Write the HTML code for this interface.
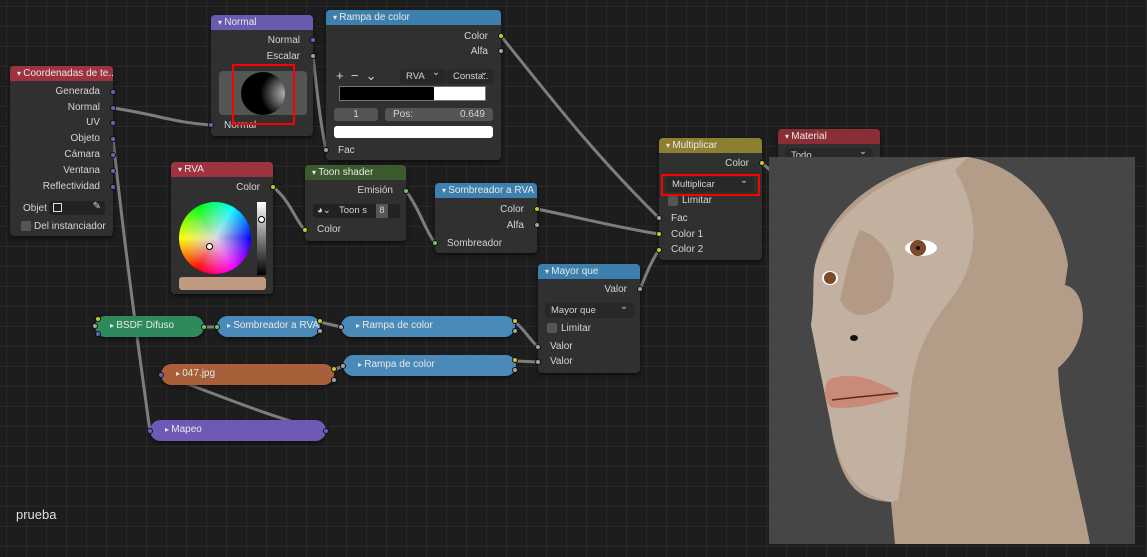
<!DOCTYPE html>
<html><head><meta charset="utf-8"><style>
*{box-sizing:border-box;margin:0;padding:0}
body{width:1147px;height:557px;overflow:hidden;position:relative;font-family:"Liberation Sans",sans-serif;font-size:10px;color:#d4d4d4;
background-color:#1d1d1d;
background-image:linear-gradient(#292929 1px,transparent 1px),linear-gradient(90deg,#292929 1px,transparent 1px);
background-size:20px 20px;background-position:6px 6px}
.n{position:absolute;background:#303030;border-radius:4px;box-shadow:0 2px 5px rgba(0,0,0,.6)}
.h{height:15px;border-radius:4px 4px 0 0;padding:2px 0 0 7px;color:#e8e8e8;font-size:10px;white-space:nowrap;overflow:hidden}
.h:before{content:"▾ ";font-size:8px}
.t{position:absolute;white-space:nowrap}
.r{text-align:right}
.s{position:absolute;width:6px;height:6px;border-radius:50%;border:1px solid #111}
.pu{background:#6363c7}.gr{background:#a1a1a1}.ye{background:#c7c729}.gn{background:#63c763}
.dd{position:absolute;background:#282828;border-radius:3px;padding:2px 6px;font-size:9.5px;white-space:nowrap}
.dd:after{content:"⌄";position:absolute;right:6px;top:-2px}
.cb{position:absolute;width:10px;height:10px;background:#555;border-radius:2px}
.c{position:absolute;border-radius:11px;height:21px;padding:4px 0 0 15px;color:#e8e8e8;font-size:10px;box-shadow:0 2px 4px rgba(0,0,0,.5);white-space:nowrap;overflow:hidden}
.c:before{content:"▸ ";font-size:8px}
</style></head><body>
<svg style="position:absolute;left:0;top:0" width="1147" height="557">
<g stroke="#7d7d7d" stroke-width="3" fill="none" stroke-linecap="round">
<path d="M113 108 C160 115,170 122,211 125"/>
<path d="M313 56 C318 100,320 120,326 150"/>
<path d="M501 36 C560 110,600 160,659 218"/>
<path d="M273 187 C290 200,295 220,305 230"/>
<path d="M406 191 C420 210,425 230,435 243"/>
<path d="M537 209 C590 220,620 228,659 234"/>
<path d="M640 289 C648 270,652 260,659 250"/>
<path d="M113 139 C125 250,140 360,150 431"/>
<path d="M180 381 C230 400,280 420,326 431"/>
<path d="M204 327 L217 327"/>
<path d="M320 322 L341 327"/>
<path d="M515 322 C525 330,530 340,538 347"/>
<path d="M516 361 L538 362"/>
<path d="M334 370 L343 366"/>
<path d="M762 163 L770 170"/>
</g></svg>

<div class="n" style="left:10px;top:66px;width:103px;height:170px">
<div class="h" style="background:#9e3340">Coordenadas de te..</div>
<div class="t r" style="right:13px;top:20px">Generada</div>
<div class="t r" style="right:13px;top:36px">Normal</div>
<div class="t r" style="right:13px;top:51px">UV</div>
<div class="t r" style="right:13px;top:67px">Objeto</div>
<div class="t r" style="right:13px;top:83px">Cámara</div>
<div class="t r" style="right:13px;top:99px">Ventana</div>
<div class="t r" style="right:13px;top:115px">Reflectividad</div>
<div class="t" style="left:13px;top:137px">Objet</div>
<div style="position:absolute;left:39px;top:135px;width:56px;height:14px;background:#222;border-radius:3px"><span style="position:absolute;left:4px;top:2px;width:9px;height:9px;border:1px solid #ddd"></span><span style="position:absolute;right:4px;top:0;font-size:10px">✎</span></div>
<div class="cb" style="left:11px;top:155px"></div>
<div class="t" style="left:24px;top:155px">Del instanciador</div>
</div>
<div class="s pu" style="left:110px;top:89px"></div><div class="s pu" style="left:110px;top:105px"></div><div class="s pu" style="left:110px;top:120px"></div><div class="s pu" style="left:110px;top:136px"></div><div class="s pu" style="left:110px;top:152px"></div><div class="s pu" style="left:110px;top:168px"></div><div class="s pu" style="left:110px;top:184px"></div>

<div class="n" style="left:211px;top:15px;width:102px;height:121px">
<div class="h" style="background:#6a5bb0">Normal</div>
<div class="t r" style="right:13px;top:20px">Normal</div>
<div class="t r" style="right:13px;top:36px">Escalar</div>
<div style="position:absolute;left:8px;top:56px;width:88px;height:44px;background:#555;border-radius:4px"></div>
<div style="position:absolute;left:30px;top:57px;width:44px;height:43px;border-radius:50%;background:radial-gradient(circle at 100% 50%,#b0b0b0 0,#666 22%,#000 50%)"></div>
<div class="t" style="left:13px;top:105px">Normal</div>
</div>
<div class="s pu" style="left:310px;top:37px"></div><div class="s gr" style="left:310px;top:53px"></div><div class="s pu" style="left:208px;top:122px"></div>
<div style="position:absolute;left:232px;top:64px;width:63px;height:61px;border:2px solid #f00"></div>

<div class="n" style="left:326px;top:10px;width:175px;height:150px">
<div class="h" style="background:#3d80ad">Rampa de color</div>
<div class="t r" style="right:13px;top:21px">Color</div>
<div class="t r" style="right:13px;top:36px">Alfa</div>
<div class="t" style="left:10px;top:58px;font-size:13px">+ &nbsp;− &nbsp;⌄</div>
<div class="dd" style="left:74px;top:59px;width:46px">RVA</div>
<div class="dd" style="left:121px;top:59px;width:47px">Consta..</div>
<div style="position:absolute;left:13px;top:76px;width:147px;height:15px;background:linear-gradient(90deg,#000 65%,#fff 65%);border:1px solid #777"></div>
<div style="position:absolute;left:8px;top:98px;width:44px;height:13px;background:#545454;border-radius:3px;text-align:center;padding-top:1px">1</div>
<div style="position:absolute;left:59px;top:98px;width:108px;height:13px;background:#545454;border-radius:3px;padding:1px 8px"><span>Pos:</span><span style="float:right">0.649</span></div>
<div style="position:absolute;left:8px;top:116px;width:159px;height:12px;background:#fff;border-radius:3px"></div>
<div class="t" style="left:12px;top:135px">Fac</div>
</div>
<div class="s ye" style="left:498px;top:33px"></div><div class="s gr" style="left:498px;top:48px"></div><div class="s gr" style="left:323px;top:147px"></div>

<div class="n" style="left:171px;top:162px;width:102px;height:132px">
<div class="h" style="background:#9e3340">RVA</div>
<div class="t r" style="right:13px;top:20px">Color</div>
<div style="position:absolute;left:8px;top:40px;width:72px;height:72px;border-radius:50%;background:radial-gradient(circle,#ddd 0,rgba(220,220,220,0) 70%),conic-gradient(from 90deg,#00f,#f0f,#f00,#ff0,#0f0,#0ff,#00f)"></div>
<div style="position:absolute;left:35px;top:81px;width:7px;height:7px;border-radius:50%;background:#fff;border:1px solid #000"></div>
<div style="position:absolute;left:86px;top:40px;width:9px;height:73px;background:linear-gradient(#fff,#000)"></div>
<div style="position:absolute;left:87px;top:54px;width:7px;height:7px;border-radius:50%;background:#fff;border:1px solid #000"></div>
<div style="position:absolute;left:8px;top:115px;width:87px;height:13px;background:#c09a80;border-radius:3px"></div>
</div>
<div class="s ye" style="left:270px;top:184px"></div>

<div class="n" style="left:305px;top:165px;width:101px;height:76px">
<div class="h" style="background:#3d5a2e">Toon shader</div>
<div class="t r" style="right:13px;top:20px">Emisión</div>
<div style="position:absolute;left:8px;top:39px;width:87px;height:14px;background:#222;border-radius:3px;font-size:9.5px"><span style="position:absolute;left:4px;top:1px">◕⌄</span><span style="position:absolute;left:26px;top:1px">Toon s</span><span style="position:absolute;left:63px;top:0;width:12px;height:14px;background:#555;text-align:center;padding-top:1px">8</span></div>
<div class="t" style="left:12px;top:59px">Color</div>
</div>
<div class="s gn" style="left:403px;top:188px"></div><div class="s ye" style="left:302px;top:227px"></div>

<div class="n" style="left:435px;top:183px;width:102px;height:70px">
<div class="h" style="background:#3d80ad">Sombreador a RVA</div>
<div class="t r" style="right:13px;top:21px">Color</div>
<div class="t r" style="right:13px;top:37px">Alfa</div>
<div class="t" style="left:12px;top:55px">Sombreador</div>
</div>
<div class="s ye" style="left:534px;top:206px"></div><div class="s gr" style="left:534px;top:222px"></div><div class="s gn" style="left:432px;top:240px"></div>

<div class="n" style="left:659px;top:138px;width:103px;height:122px">
<div class="h" style="background:#8c8030">Multiplicar</div>
<div class="t r" style="right:13px;top:20px">Color</div>
<div class="dd" style="left:7px;top:39px;width:88px">Multiplicar</div>
<div class="cb" style="left:9px;top:58px"></div>
<div class="t" style="left:23px;top:57px">Limitar</div>
<div class="t" style="left:12px;top:75px">Fac</div>
<div class="t" style="left:12px;top:91px">Color 1</div>
<div class="t" style="left:12px;top:106px">Color 2</div>
</div>
<div style="position:absolute;left:661px;top:174px;width:99px;height:22px;border:2px solid #f00"></div>
<div class="s ye" style="left:759px;top:160px"></div><div class="s gr" style="left:656px;top:215px"></div><div class="s ye" style="left:656px;top:231px"></div><div class="s ye" style="left:656px;top:247px"></div>

<div class="n" style="left:778px;top:129px;width:102px;height:40px">
<div class="h" style="background:#8a2e36">Material</div>
<div class="dd" style="left:7px;top:19px;width:88px">Todo</div>
</div>

<div class="n" style="left:538px;top:264px;width:102px;height:109px">
<div class="h" style="background:#3d80ad">Mayor que</div>
<div class="t r" style="right:13px;top:20px">Valor</div>
<div class="dd" style="left:7px;top:39px;width:89px">Mayor que</div>
<div class="cb" style="left:9px;top:59px"></div>
<div class="t" style="left:23px;top:59px">Limitar</div>
<div class="t" style="left:12px;top:77px">Valor</div>
<div class="t" style="left:12px;top:92px">Valor</div>
</div>
<div class="s gr" style="left:637px;top:286px"></div><div class="s gr" style="left:535px;top:344px"></div><div class="s gr" style="left:535px;top:359px"></div>

<div class="c" style="left:95px;top:316px;width:109px;background:#2e8a5a">BSDF Difuso</div>
<div class="c" style="left:217px;top:316px;width:103px;background:#4a8ab8;padding-left:10px">Sombreador a RVA</div>
<div class="c" style="left:341px;top:316px;width:174px;background:#4a8ab8">Rampa de color</div>
<div class="c" style="left:343px;top:355px;width:173px;background:#4a8ab8">Rampa de color</div>
<div class="c" style="left:161px;top:364px;width:173px;background:#a8603a">047.jpg</div>
<div class="c" style="left:150px;top:420px;width:176px;background:#6e5ab6">Mapeo</div>
<div class="s ye" style="left:95px;top:316px"></div><div class="s gr" style="left:92px;top:323px"></div><div class="s pu" style="left:95px;top:331px"></div>
<div class="s gn" style="left:201px;top:324px"></div><div class="s gn" style="left:214px;top:324px"></div>
<div class="s ye" style="left:317px;top:318px"></div><div class="s gr" style="left:317px;top:328px"></div><div class="s gr" style="left:338px;top:324px"></div>
<div class="s ye" style="left:512px;top:318px"></div><div class="s gr" style="left:512px;top:328px"></div>
<div class="s ye" style="left:512px;top:357px"></div><div class="s gr" style="left:512px;top:367px"></div><div class="s gr" style="left:340px;top:363px"></div>
<div class="s pu" style="left:158px;top:372px"></div><div class="s ye" style="left:331px;top:366px"></div><div class="s gr" style="left:331px;top:377px"></div>
<div class="s pu" style="left:147px;top:428px"></div><div class="s pu" style="left:323px;top:428px"></div>

<div class="t" style="left:16px;top:507px;font-size:13px;color:#e0e0e0">prueba</div>

<svg style="position:absolute;left:769px;top:157px" width="366" height="387" viewBox="769 157 366 387">
<rect x="769" y="157" width="366" height="387" fill="#464646"/>
<path d="M968 157 C1020 165,1060 210,1068 265 L1065 285 C1088 290,1092 340,1058 368 C1060 420,1080 490,1090 544 L895 544 L891 502 C860 500,840 490,830 420 C822 380,815 345,811 325 C815 300,812 280,815 265 C830 200,900 160,968 157Z" fill="#b39d89"/>
<path d="M968 157 C930 160,840 190,815 265 C812 280,815 300,811 325 C815 345,822 380,830 420 C840 480,860 495,891 502 L898 500 C905 460,908 420,912 380 C920 340,935 320,950 300 C975 270,985 220,955 170Z" fill="#c2b0a0"/>
<path d="M860 230 C890 240,900 270,890 300 C870 320,850 320,840 300 C845 280,850 250,860 230Z" fill="#b29a86"/>
<ellipse cx="921" cy="248" rx="16" ry="8" fill="#fff"/><circle cx="918" cy="248" r="8" fill="#7a4a2a"/><circle cx="918" cy="248" r="2" fill="#111"/>
<ellipse cx="830" cy="278" rx="8" ry="7" fill="#fff"/><circle cx="830" cy="278" r="6" fill="#7a4a2a"/>
<path d="M828 380 C850 370,880 380,900 395 C880 405,845 410,830 407 C824 398,824 388,828 380Z" fill="#c98a7a"/>
<path d="M832 400 C855 397,880 395,898 393" stroke="#5a2a20" stroke-width="1.5" fill="none"/>
<ellipse cx="854" cy="338" rx="4" ry="3" fill="#111"/>
</svg>
</body></html>
